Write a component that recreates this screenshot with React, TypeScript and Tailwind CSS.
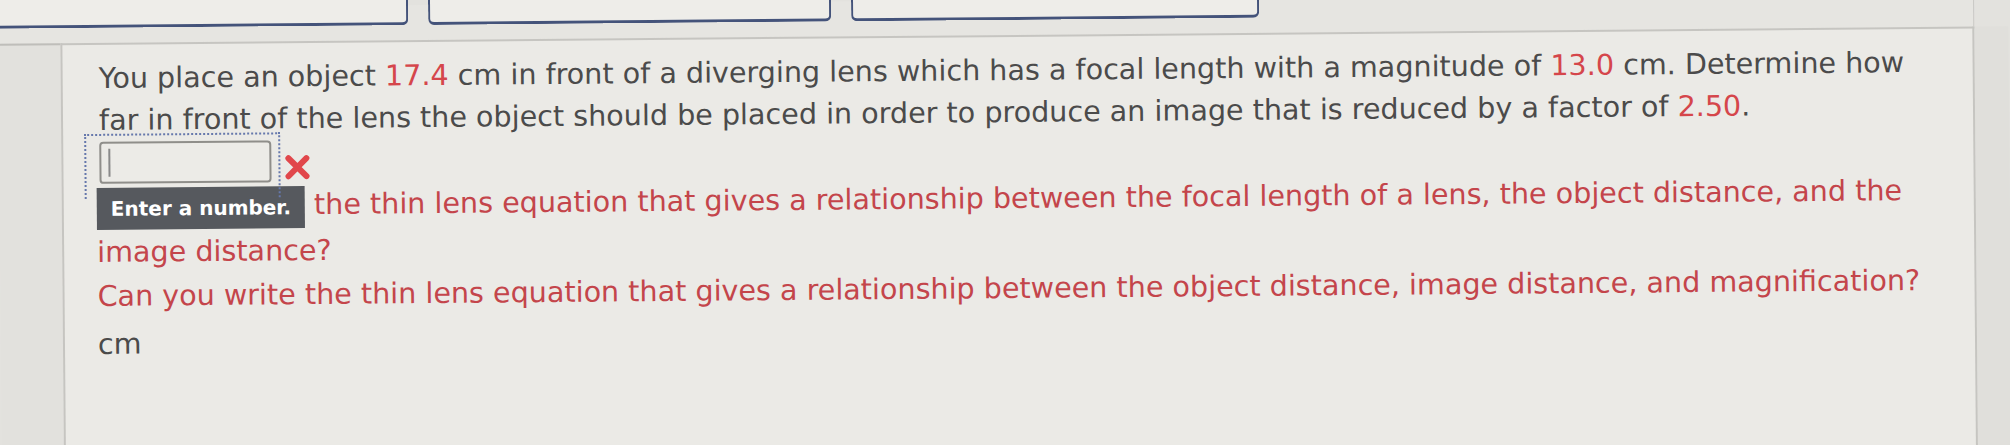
import React from "react";

const font = { fontFamily: '"DejaVu Sans", Verdana, sans-serif' };

// Red cross shown next to a wrong answer
const WrongMark = () => (
  <svg viewBox="0 0 28 26" className="w-[28px] h-[26px]">
    <path d="M5 4 L23 22 M23 4 L5 22" stroke="#e1474b" strokeWidth="6" strokeLinecap="round" />
  </svg>
);

const Tab = ({ className = "" }: { className?: string }) => (
  <div
    className={`h-[40px] -mt-[20px] rounded-b-[6px] border-x-2 border-b-[3px] border-[#44537a] bg-[#eeede9] ${className}`}
  />
);

export default function App() {
  return (
    <div className="h-[445px] w-[2010px] overflow-hidden bg-[#e3e2de]" style={font}>
      <div className="-rotate-[0.5deg] w-[2010px]">
        {/* Tabs strip */}
        <div className="flex h-[35px] w-[1976px] gap-[20px] border-r border-[#c9c8c4] bg-[#e6e5e1]">
          <Tab className="w-[414px] -ml-[4px]" />
          <Tab className="w-[403px]" />
          <Tab className="w-[408px]" />
        </div>

        <div className="flex">
          <div className="w-[62px] shrink-0 border-t-2 border-[#bfbeba] bg-[#e2e1dd]" />
          <div className="relative h-[420px] w-[1914px] shrink-0 border-x-2 border-t-2 border-[#c6c5c1] bg-[#ebeae6] pl-[36px] pt-[12px]">
            {/* Question */}
            <p className="text-[28.6px] leading-[42px] text-[#4b4b4b]">
              You place an object <span className="text-[#d5464b]">17.4</span> cm in front of a diverging lens which has a
              focal length with a magnitude of <span className="text-[#d5464b]">13.0</span> cm. Determine how
              <br />
              far in front of the lens the object should be placed in order to produce an image that is reduced by a
              factor of <span className="text-[#d5464b]">2.50</span>.
            </p>

            {/* Answer field */}
            <div className="flex items-end gap-[12px] pt-[1px]">
              <div className="flex h-[42px] w-[172px] items-center rounded-[4px] border-2 border-[#8f8e8a] bg-[#ecebe7] pl-[7px]">
                <div className="h-[28px] w-[2px] bg-[#8a8a8a]" />
              </div>
              <div className="mb-[2px]">
                <WrongMark />
              </div>
            </div>

            {/* Hint */}
            <p className="-ml-[3px] text-[28.6px] leading-[44px] text-[#c4454b]">
              <span className="inline-block bg-[#56595e] px-[14px] text-[20px] font-semibold leading-[42px] text-white">
                Enter a number.
              </span>{" "}
              the thin lens equation that gives a relationship between the focal length of a lens, the object distance,
              and the
              <br />
              image distance?
              <br />
              Can you write the thin lens equation that gives a relationship between the object distance, image
              distance, and magnification?
            </p>
            <p className="-ml-[3px] text-[28.6px] leading-[52px] text-[#4b4b4b]">cm</p>

            {/* Dotted focus outline around the answer */}
            <div className="pointer-events-none absolute left-[21px] top-[89px] h-[65px] w-[196px] border-[2.5px] border-dotted border-[#6678ac] border-b-0" />
          </div>
          <div className="w-[34px] shrink-0 bg-[#e0dfdb]" />
        </div>
      </div>
    </div>
  );
}
